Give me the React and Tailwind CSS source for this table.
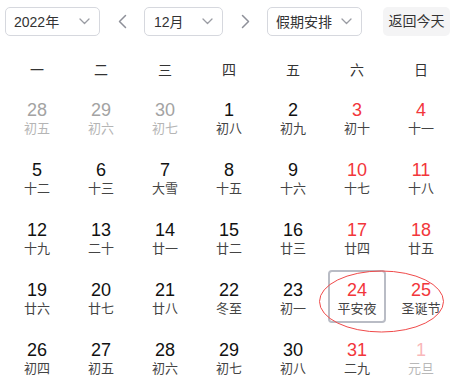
import React from "react";

const Chevron = () => (
  <svg width="11" height="7" viewBox="0 0 11 7" fill="none">
    <path d="M1 1l4.5 4.5L10 1" stroke="#9a9ca3" strokeWidth="1.3" strokeLinecap="round" strokeLinejoin="round" />
  </svg>
);

const Arrow = ({ dir }) => (
  <svg width="9" height="15" viewBox="0 0 9 15" fill="none">
    <path
      d={dir === "left" ? "M7.5 1.5L1.5 7.5l6 6" : "M1.5 1.5l6 6-6 6"}
      stroke="#8e9099"
      strokeWidth="1.5"
      strokeLinecap="round"
      strokeLinejoin="round"
    />
  </svg>
);

const Select = ({ label, w, pl, pr }) => (
  <div className={`flex items-center justify-between h-[29px] rounded-[5px] border border-[#d6d8de] bg-white ${w} ${pl} ${pr}`}>
    <span className="text-[14px] text-[#333] leading-none">{label}</span>
    <Chevron />
  </div>
);

const weeks = ["一", "二", "三", "四", "五", "六", "日"];

const rows = [
  [["28", "初五", "p"], ["29", "初六", "p"], ["30", "初七", "p"], ["1", "初八"], ["2", "初九"], ["3", "初十", "r"], ["4", "十一", "r"]],
  [["5", "十二"], ["6", "十三"], ["7", "大雪"], ["8", "十五"], ["9", "十六"], ["10", "十七", "r"], ["11", "十八", "r"]],
  [["12", "十九"], ["13", "二十"], ["14", "廿一"], ["15", "廿二"], ["16", "廿三"], ["17", "廿四", "r"], ["18", "廿五", "r"]],
  [["19", "廿六"], ["20", "廿七"], ["21", "廿八"], ["22", "冬至"], ["23", "初一"], ["24", "平安夜", "rs"], ["25", "圣诞节", "r"]],
  [["26", "初四"], ["27", "初五"], ["28", "初六"], ["29", "初七"], ["30", "初八"], ["31", "二九", "r"], ["1", "元旦", "n"]],
];

const Cell = ({ d }) => {
  const [num, lunar, t = ""] = d;
  let numC = "text-[#111]";
  let lunC = "text-[#444]";
  if (t === "p") {
    numC = "text-[#a3a3a3]";
    lunC = "text-[#b5b5b5]";
  } else if (t.includes("r")) {
    numC = "text-[#f2363b]";
  } else if (t === "n") {
    numC = "text-[#f9b8ba]";
    lunC = "text-[#b8b8b8]";
  }
  const sel = t.includes("s");
  return (
    <div className="h-[60px] flex justify-center">
      <div
        className={`w-[58px] h-[53px] flex flex-col items-center pt-[7px] rounded-[4px] border-2 ${
          sel ? "border-[#b9bcc5]" : "border-transparent"
        }`}
      >
        <span className={`text-[18px] leading-[22px] ${numC}`}>{num}</span>
        <span className={`text-[13px] leading-[16px] ${lunC}`}>{lunar}</span>
      </div>
    </div>
  );
};

export default function App() {
  return (
    <div
      className="relative w-[461px] h-[390px] bg-white overflow-hidden"
      style={{ fontFamily: '"Liberation Sans", "Noto Sans CJK SC", sans-serif' }}
    >
      <div className="flex items-center pl-[5px] pt-[7px]">
        <Select label="2022年" w="w-[95px]" pl="pl-[8px]" pr="pr-[9px]" />
        <div className="w-[44px] flex justify-center">
          <Arrow dir="left" />
        </div>
        <Select label="12月" w="w-[79px]" pl="pl-[9px]" pr="pr-[9px]" />
        <div className="w-[44px] flex justify-center">
          <Arrow dir="right" />
        </div>
        <Select label="假期安排" w="w-[95px]" pl="pl-[8px]" pr="pr-[9px]" />
        <div className="ml-[21px] w-[67px] h-[29px] rounded-[5px] bg-[#f4f4f5] flex items-center justify-center text-[14px] text-[#333]">
          返回今天
        </div>
      </div>

      <div className="px-[5px] mt-[14px]">
        <div className="grid grid-cols-7 w-[448px] h-[40px] items-center">
          {weeks.map((w) => (
            <div key={w} className="text-center text-[14px] text-[#333]">
              {w}
            </div>
          ))}
        </div>
        {rows.map((r, i) => (
          <div key={i} className="grid grid-cols-7 w-[448px]">
            {r.map((d, j) => (
              <Cell key={j} d={d} />
            ))}
          </div>
        ))}
      </div>

      <svg className="absolute left-0 top-0 pointer-events-none" width="461" height="390">
        <ellipse cx="381.5" cy="301.5" rx="62" ry="30.5" fill="none" stroke="#f04a4a" strokeWidth="1" />
      </svg>
    </div>
  );
}
